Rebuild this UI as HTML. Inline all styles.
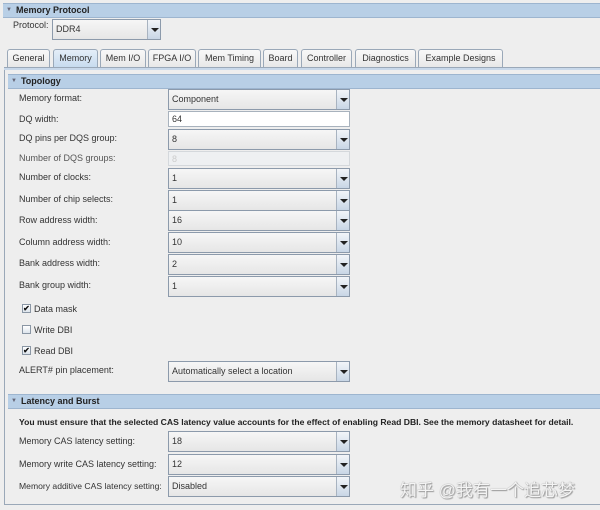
<!DOCTYPE html>
<html><head><meta charset="utf-8"><style>
*{margin:0;padding:0;box-sizing:border-box}
body{width:600px;height:510px;background:#eeeeee;font-family:"Liberation Sans",sans-serif;font-size:9px;color:#333;position:relative;overflow:hidden}
.a{position:absolute;white-space:nowrap}
.hdr{position:absolute;background:#b8cfe6;border-top:1px solid #9db5cf;border-bottom:1px solid #9db5cf;height:15px;font-weight:bold;font-size:9px;color:#222;line-height:13px}
.hdr i{font-style:normal;font-size:6px;color:#667;margin:0 4px 0 3px;vertical-align:2px}
.cb{position:absolute;height:21px;border:1px solid #8c9aab;background:linear-gradient(#f6f6f6,#e6e6e6);line-height:19px;padding-left:3px}
.cb b{position:absolute;right:0;top:0;width:13px;height:19px;border-left:1px solid #a8b3c0;background:linear-gradient(#f2f5f9,#c8d6e6)}
.cb b:after{content:"";position:absolute;left:3px;top:8px;border-left:4px solid transparent;border-right:4px solid transparent;border-top:4px solid #222}
.tf{position:absolute;height:16px;border:1px solid #a8b2bd;background:#fff;line-height:14px;padding-left:3px}
.tab{position:absolute;top:49px;height:18px;border:1px solid #9aa8b8;border-bottom:none;background:linear-gradient(#f8f8f8,#e8e8e8);line-height:16px;text-align:center;border-radius:3px 3px 0 0}
.ck{position:absolute;width:9px;height:9px;border:1px solid #8a96a4;background:linear-gradient(#fff,#dde4ec);font-size:8px;line-height:7px;text-align:center;color:#111;font-weight:bold}
</style></head><body>
<div class="hdr" style="left:3px;top:3px;width:597px"><i>▼</i>Memory Protocol</div>
<div class="a" style="left:13px;top:20px">Protocol:</div>
<div class="cb" style="left:52px;top:19px;width:109px">DDR4<b></b></div>

<div class="tab" style="left:7px;width:43px">General</div>
<div class="tab" style="left:53px;width:45px;background:linear-gradient(#e4eef8,#c6daee);height:19px">Memory</div>
<div class="tab" style="left:100px;width:46px">Mem I/O</div>
<div class="tab" style="left:148px;width:48px">FPGA I/O</div>
<div class="tab" style="left:198px;width:63px">Mem Timing</div>
<div class="tab" style="left:263px;width:35px">Board</div>
<div class="tab" style="left:301px;width:51px">Controller</div>
<div class="tab" style="left:355px;width:61px">Diagnostics</div>
<div class="tab" style="left:418px;width:85px">Example Designs</div>
<div class="a" style="left:4px;top:67px;width:596px;height:438px;border-top:1px solid #9aa8b8;border-left:1px solid #9aa8b8;border-bottom:1px solid #9aa8b8"></div>
<div class="a" style="left:4px;top:68px;width:596px;height:2px;background:#c8d8ea"></div>

<div class="hdr" style="left:8px;top:74px;width:592px"><i>▼</i>Topology</div>
<div class="a" style="left:19px;top:93px">Memory format:</div>
<div class="cb" style="left:168px;top:89px;width:182px">Component<b></b></div>
<div class="a" style="left:19px;top:114px">DQ width:</div>
<div class="tf" style="left:168px;top:111px;width:182px">64</div>
<div class="a" style="left:19px;top:133px">DQ pins per DQS group:</div>
<div class="cb" style="left:168px;top:129px;width:182px">8<b></b></div>
<div class="a" style="left:19px;top:153px;color:#555">Number of DQS groups:</div>
<div class="tf" style="left:168px;top:151px;width:182px;height:15px;background:#eef0f2;border-color:#d4d8dc;color:#ccc">8</div>
<div class="a" style="left:19px;top:172px">Number of clocks:</div>
<div class="cb" style="left:168px;top:168px;width:182px">1<b></b></div>
<div class="a" style="left:19px;top:194px">Number of chip selects:</div>
<div class="cb" style="left:168px;top:190px;width:182px">1<b></b></div>
<div class="a" style="left:19px;top:215px">Row address width:</div>
<div class="cb" style="left:168px;top:210px;width:182px">16<b></b></div>
<div class="a" style="left:19px;top:237px">Column address width:</div>
<div class="cb" style="left:168px;top:232px;width:182px">10<b></b></div>
<div class="a" style="left:19px;top:258px">Bank address width:</div>
<div class="cb" style="left:168px;top:254px;width:182px">2<b></b></div>
<div class="a" style="left:19px;top:280px">Bank group width:</div>
<div class="cb" style="left:168px;top:276px;width:182px">1<b></b></div>
<div class="ck" style="left:22px;top:304px">✔</div><div class="a" style="left:34px;top:304px">Data mask</div>
<div class="ck" style="left:22px;top:325px"></div><div class="a" style="left:34px;top:325px">Write DBI</div>
<div class="ck" style="left:22px;top:346px">✔</div><div class="a" style="left:34px;top:346px">Read DBI</div>
<div class="a" style="left:19px;top:365px">ALERT# pin placement:</div>
<div class="cb" style="left:168px;top:361px;width:182px">Automatically select a location<b></b></div>

<div class="hdr" style="left:8px;top:394px;width:592px"><i>▼</i>Latency and Burst</div>
<div class="a" style="left:19px;top:417px;font-weight:bold;color:#222;font-size:8.6px">You must ensure that the selected CAS latency value accounts for the effect of enabling Read DBI. See the memory datasheet for detail.</div>
<div class="a" style="left:19px;top:436px">Memory CAS latency setting:</div>
<div class="cb" style="left:168px;top:431px;width:182px">18<b></b></div>
<div class="a" style="left:19px;top:459px">Memory write CAS latency setting:</div>
<div class="cb" style="left:168px;top:454px;width:182px">12<b></b></div>
<div class="a" style="left:19px;top:481px;font-size:8.6px">Memory additive CAS latency setting:</div>
<div class="cb" style="left:168px;top:476px;width:182px">Disabled<b></b></div>
<div class="a" style="left:400px;top:476px;font-size:17px;color:#f4f4f4;text-shadow:0 0 1px #888,1px 1px 1px #999;font-family:'Liberation Sans','Noto Sans CJK SC',sans-serif">知乎 @我有一个追芯梦</div>
</body></html>
